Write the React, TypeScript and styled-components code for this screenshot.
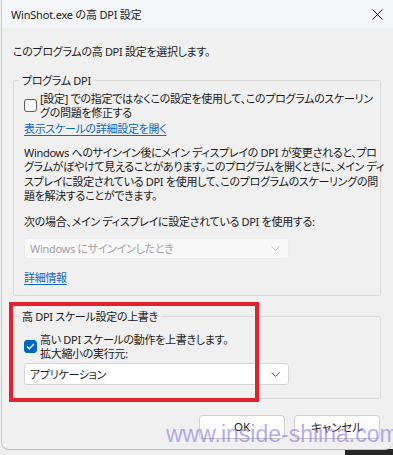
import React from "react";
import styled, { createGlobalStyle } from "styled-components";

const GlobalStyle = createGlobalStyle`
  html, body { margin: 0; padding: 0; }
  body {
    width: 393px;
    height: 455px;
    overflow: hidden;
    background: #eeeeee;
    font-family: "Noto Sans", "Noto Sans CJK JP", sans-serif;
    font-feature-settings: "palt";
    color: #1b1b1b;
  }
`;

const Stage = styled.div`
  position: relative;
  width: 393px;
  height: 455px;
`;

const Desk = styled.div`
  position: absolute;
  right: 0;
  bottom: 0;
  width: 48px;
  height: 6px;
  background: #262626;
`;

const Window = styled.div`
  position: relative;
  width: 392px;
  height: 450px;
  margin-left: 1px;
  box-sizing: border-box;
  border-left: 1px solid #cdcdcd;
  border-bottom: 1px solid #bdbdbd;
  border-radius: 0 0 8px 8px;
  background: #f0f0f0;
  overflow: hidden;
`;

const TitleBar = styled.div`
  height: 28px;
  display: flex;
  align-items: center;
  justify-content: space-between;
  padding: 0 10px 0 9px;
  background: #f5f6f9;
  font-size: 11px;
  letter-spacing: -0.2px;
`;

const Body = styled.div`
  padding: 0 12px 0 11px;
  font-size: 11px;
  letter-spacing: -0.3px;
`;

const Line = styled.div<{ $top?: number }>`
  line-height: 15px;
  white-space: nowrap;
  margin-top: ${(p) => p.$top ?? 0}px;
`;

const Group = styled.fieldset<{ $top: number; $bottom: number }>`
  margin: ${(p) => p.$top}px 0 0;
  padding: 0 10px ${(p) => p.$bottom}px 10px;
  border: 1px solid #dcdcdc;
  border-radius: 2px;
  min-width: 0;
`;

const Legend = styled.legend`
  margin-left: -5px;
  padding: 0 3px;
  line-height: 15px;
  white-space: nowrap;
`;

const CheckRow = styled.label<{ $top: number }>`
  display: flex;
  align-items: center;
  gap: 3px;
  margin-top: ${(p) => p.$top}px;
  line-height: 14px;
  white-space: nowrap;
`;

const Box = styled.span<{ $checked?: boolean }>`
  flex: none;
  width: 13px;
  height: 13px;
  box-sizing: border-box;
  border-radius: 3px;
  border: 1px solid ${(p) => (p.$checked ? "#0067c0" : "#5c5c5c")};
  background: ${(p) => (p.$checked ? "#0067c0" : "#f9f9f9")};
  display: flex;
  align-items: center;
  justify-content: center;
`;

const Link = styled.a<{ $top: number }>`
  display: block;
  width: max-content;
  margin-top: ${(p) => p.$top}px;
  line-height: 15px;
  color: #1467c4;
  text-decoration: underline;
  text-underline-offset: 2px;
`;

const Para = styled.p`
  margin: 10px 0 0;
  line-height: 14.5px;
  white-space: nowrap;
`;

const Select = styled.div<{ $disabled?: boolean; $top: number }>`
  width: 265px;
  height: ${(p) => (p.$disabled ? 21 : 22)}px;
  margin-top: ${(p) => p.$top}px;
  box-sizing: border-box;
  display: flex;
  align-items: center;
  justify-content: space-between;
  padding: 0 8px 0 5px;
  border-radius: 3px;
  border: 1px solid ${(p) => (p.$disabled ? "#ececec" : "#d6d6d6")};
  background: ${(p) => (p.$disabled ? "#f8f8f8" : "#ffffff")};
  color: ${(p) => (p.$disabled ? "#a3a3a3" : "#1b1b1b")};
  white-space: nowrap;
`;

const Buttons = styled.div`
  display: flex;
  justify-content: flex-end;
  gap: 9px;
  margin-top: 16px;
  padding-right: 1px;
`;

const Button = styled.button`
  width: 86px;
  height: 24px;
  box-sizing: border-box;
  border: 1px solid #d3d3d3;
  border-bottom-color: #c4c4c4;
  border-radius: 4px;
  background: #fdfdfd;
  font: inherit;
  font-size: 11.5px;
  color: #1b1b1b;
  padding: 0;
`;

const Highlight = styled.div`
  position: absolute;
  left: 7px;
  top: 302px;
  width: 250px;
  height: 100px;
  box-sizing: border-box;
  border: 4px solid #e3202b;
  pointer-events: none;
`;

const Watermark = styled.div`
  position: absolute;
  left: 164px;
  top: 421px;
  font-family: "Liberation Sans", Arial, sans-serif;
  font-size: 23px;
  color: rgba(140, 115, 230, 0.6);
  white-space: nowrap;
  pointer-events: none;
`;

const Chevron = ({ color }: { color: string }) => (
  <svg width="9" height="5" viewBox="0 0 9 5">
    <polyline points="0.5,0.5 4.5,4.5 8.5,0.5" fill="none" stroke={color} strokeWidth="1" />
  </svg>
);

const Close = () => (
  <svg width="11" height="11" viewBox="0 0 11 11">
    <path d="M0.5 0.5 L10.5 10.5 M10.5 0.5 L0.5 10.5" stroke="#1b1b1b" strokeWidth="1" />
  </svg>
);

const Check = () => (
  <svg width="9" height="7" viewBox="0 0 9 7">
    <polyline points="1,3.5 3.3,5.8 8,1" fill="none" stroke="#fff" strokeWidth="1.3" />
  </svg>
);

export default function App() {
  return (
    <Stage>
      <GlobalStyle />
      <Desk />
      <Window>
        <TitleBar>
          <span>WinShot.exe の高 DPI 設定</span>
          <Close />
        </TitleBar>
        <Body>
          <Line $top={16}>このプログラムの高 DPI 設定を選択します。</Line>
          <Group $top={14} $bottom={9.5}>
            <Legend>プログラム DPI</Legend>
            <CheckRow $top={3.5}>
              <Box />
              <span>
                [設定] での指定ではなくこの設定を使用して、このプログラムのスケーリン
                <br />
                グの問題を修正する
              </span>
            </CheckRow>
            <Link $top={1}>表示スケールの詳細設定を開く</Link>
            <Para>
              Windows へのサインイン後にメイン ディスプレイの DPI が変更されると、プロ
              <br />
              グラムがぼやけて見えることがあります。このプログラムを開くときに、メイン ディ
              <br />
              スプレイに設定されている DPI を使用して、このプログラムのスケーリングの問
              <br />
              題を解決することができます。
            </Para>
            <Line $top={10.5}>次の場合、メイン ディスプレイに設定されている DPI を使用する:</Line>
            <Select $disabled $top={8.5}>
              <span>Windows にサインインしたとき</span>
              <Chevron color="#c8c8c8" />
            </Select>
            <Link $top={11.5}>詳細情報</Link>
          </Group>
          <Group $top={13.5} $bottom={12.5}>
            <Legend>高 DPI スケール設定の上書き</Legend>
            <CheckRow $top={8.5}>
              <Box $checked>
                <Check />
              </Box>
              <span>
                高い DPI スケールの動作を上書きします。
                <br />
                拡大縮小の実行元:
              </span>
            </CheckRow>
            <Select $top={2.5}>
              <span>アプリケーション</span>
              <Chevron color="#5f5f5f" />
            </Select>
          </Group>
          <Buttons>
            <Button>OK</Button>
            <Button>キャンセル</Button>
          </Buttons>
        </Body>
        <Highlight />
        <Watermark>www.inside-shiina.com</Watermark>
      </Window>
    </Stage>
  );
}
